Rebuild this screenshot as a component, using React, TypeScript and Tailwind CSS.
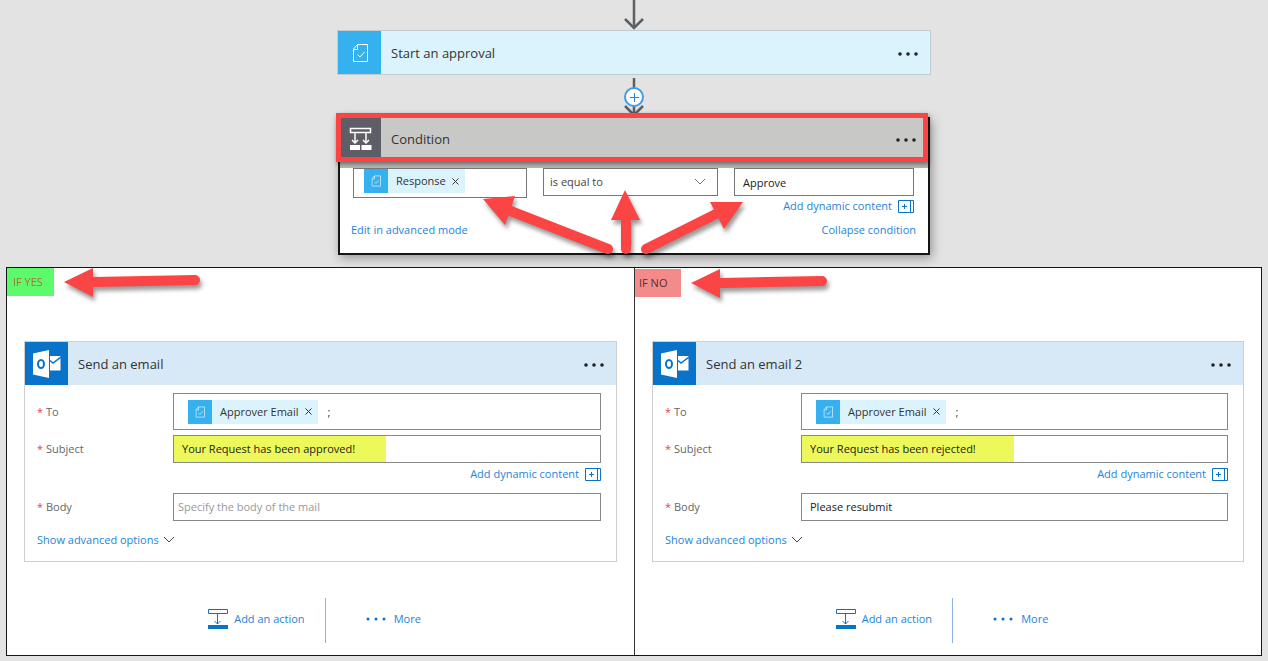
import { useState } from 'react';

const OutlookIcon = () => (
  <svg width="28" height="28" viewBox="0 0 28 28" fill="none">
    <path d="M17 6h10.500v14.500H17z" fill="#fff" />
    <path d="M17 10.500l3 2.500 8-6" stroke="#0873c8" strokeWidth="1.500" />
    <path d="M0 3.500L16 0v28L0 24.500z" fill="#fff" />
    <ellipse cx="8" cy="14" rx="3" ry="4" stroke="#0873c8" strokeWidth="2" />
  </svg>
);

const ApprovalIcon = ({ size = 20 }: { size?: number }) => (
  <svg width={size} height={size} viewBox="0 0 20 20" fill="none" stroke="#fff">
    <path d="M7.500 1.500H17.500V18.500H3.500V6z" />
    <path d="M3.500 6.500H7.500V1.500" />
    <path d="M7.500 11.500l2.500 2.500 4.500-5" />
  </svg>
);

const ConditionIcon = () => (
  <svg width="24" height="24" viewBox="0 0 24 24" fill="none" stroke="#fff">
    <path d="M1.500 1.500h20v4h-20z" strokeWidth="1.500" />
    <path d="M6 6v10M17 6v10" strokeWidth="1.500" />
    <path d="M3 13l3 3 3-3M14 13l3 3 3-3" strokeWidth="1.500" />
    <path d="M1 18h10v5H1zM12.500 18h10v5h-10z" fill="#fff" stroke="none" />
  </svg>
);

const AddActionIcon = () => (
  <svg width="20" height="20" viewBox="0 0 20 20" fill="none" stroke="#0873c8">
    <path d="M.5.500h19v4H.5z" />
    <path d="M9.500 5v10M6.500 12l3 3 3-3" />
    <path d="M0 16h20v4H0z" fill="#0873c8" stroke="none" />
  </svg>
);

const Chevron = ({ className }: { className: string }) => (
  <svg width="12" height="8" viewBox="0 0 12 8" fill="none" className={className}>
    <path d="M1 1l5 5 5-5" stroke="currentColor" />
  </svg>
);

const MenuButton = ({ label }: { label: string }) => (
  <button type="button" aria-label={label} className="ml-auto mr-3 mt-0.5 text-[#222]">
    <svg width="20" height="4" viewBox="0 0 20 4" fill="currentColor">
      <circle cx="2" cy="2" r="1.800" />
      <circle cx="10" cy="2" r="1.800" />
      <circle cx="18" cy="2" r="1.800" />
    </svg>
  </button>
);

const AddDynamicContent = () => (
  <button type="button" className="flex items-center gap-1.5 text-[#2583d8]">
    Add dynamic content
    <svg width="16" height="13" viewBox="0 0 16 13" fill="none" stroke="#0873c8">
      <path d="M.5.500h15v12H.5zM12.500.500v12M4 6.500h5M6.500 4v5" />
    </svg>
  </button>
);

const Token = ({ text }: { text: string }) => (
  <span className="flex h-6 items-center bg-[#dbf3fc]">
    <span className="flex h-6 w-6 items-center justify-center bg-[#35b1ef]">
      <ApprovalIcon size={12} />
    </span>
    <span className="pl-2 text-[#333]">{text}</span>
    <button type="button" aria-label={`Remove ${text}`} className="px-1.5">
      <svg width="7" height="7" viewBox="0 0 7 7" stroke="#333">
        <path d="M.5.500l6 6M6.500.500l-6 6" />
      </svg>
    </button>
  </span>
);

type ArrowProps = { head: string; shaft: string };

const Arrow = ({ head, shaft }: ArrowProps) => (
  <g className="drop-shadow-[2px_4px_2px_rgba(0,0,0,0.4)]">
    <path d={shaft} stroke="#fb4444" strokeWidth="10" strokeLinecap="round" />
    <path d={head} fill="#fb4444" />
  </g>
);

const Condition = () => {
  const [operator, setOperator] = useState<string>('is equal to');

  return (
    <section className="relative w-full max-w-[592px] border-2 border-t-0 border-[#151515] bg-white pb-3.5 shadow-[2px_3px_10px_rgba(0,0,0,0.35)]">
      <header className="flex h-11 items-center bg-[#c8c8c7]">
        <div className="flex h-full w-[41px] items-center justify-center bg-[#5e5e68]">
          <ConditionIcon />
        </div>
        <h2 className="pl-2.5 text-[13px] text-[#333]">Condition</h2>
        <MenuButton label="Condition menu" />
      </header>
      <div className="h-[7px] bg-[#b4b4b2]" />
      <div className="pl-[11px] pr-3">
        <div className="grid grid-cols-[174fr_175fr_180fr] items-start gap-4 px-0.5">
          <div className="flex h-[30px] min-w-0 items-start border border-[#777] pl-2.5">
            <Token text="Response" />
            <input aria-label="Value to check" className="min-w-0 flex-1 outline-none" />
          </div>
          <div className="relative min-w-0">
            <select
              aria-label="Operator"
              value={operator}
              onChange={(e) => setOperator(e.target.value)}
              className="h-7 w-full appearance-none border border-[#777] bg-white pl-1.5 text-[#444]"
            >
              <option>is equal to</option>
              <option>is not equal to</option>
            </select>
            <Chevron className="pointer-events-none absolute right-3 top-2.5 text-[#777]" />
          </div>
          <input
            aria-label="Compared value"
            defaultValue="Approve"
            className="h-7 min-w-0 border border-[#777] pl-2 text-[#222]"
          />
        </div>
        <div className="-mt-px flex justify-end pr-0.5">
          <AddDynamicContent />
        </div>
        <div className="mt-1.5 flex justify-between text-[#2583d8]">
          <a href="#advanced">Edit in advanced mode</a>
          <a href="#collapse">Collapse condition</a>
        </div>
      </div>
      <div className="absolute -left-1 right-0 -top-1 h-[49px] border-[5px] border-[#fb4444] shadow-[1px_2px_4px_rgba(0,0,0,0.4)]" />
      <svg className="pointer-events-none absolute left-[140px] top-[70px] overflow-visible" width="270" height="70" viewBox="480 187 270 70" fill="none">
        <Arrow head="M483 199l32-3-10 29z" shaft="M508 210L608 249" />
        <Arrow head="M625 190l15 30h-29z" shaft="M626 216V249" />
        <Arrow head="M743 202l-33 0 14 27z" shaft="M646 249L716 214" />
      </svg>
    </section>
  );
};

type EmailProps = {
  id: string;
  title: string;
  subject: string;
  body: string;
};

const EmailCard = ({ id, title, subject, body }: EmailProps) => (
  <section className="border border-[#cfcfcf] bg-white pb-3">
    <header className="flex h-[43px] items-center bg-[#d7e8f7]">
      <div className="flex h-full w-[43px] items-center justify-center bg-[#0873c8]">
        <OutlookIcon />
      </div>
      <h2 className="pl-2.5 text-[13px] text-[#333]">{title}</h2>
      <MenuButton label={`${title} menu`} />
    </header>
    <div className="pl-3 pr-[15px] pt-2">
      <div className="flex items-center">
        <label htmlFor={`${id}-to`} className="w-[136px] text-[#666]">
          <span className="text-[#e04848]">*</span> To
        </label>
        <div className="flex h-[37px] flex-1 items-center border border-[#888] pl-3.5">
          <Token text="Approver Email" />
          <input id={`${id}-to`} defaultValue=";" className="min-w-0 flex-1 pl-2.5 outline-none" />
        </div>
      </div>
      <div className="mt-[5px] flex items-center">
        <label htmlFor={`${id}-subject`} className="w-[136px] text-[#666]">
          <span className="text-[#e04848]">*</span> Subject
        </label>
        <div className="flex h-7 flex-1 border border-[#888]">
          <input id={`${id}-subject`} defaultValue={subject} className="w-[212px] bg-[#edf95a] pl-2 text-[#222] outline-none" />
        </div>
      </div>
      <div className="mt-0.5 flex justify-end">
        <AddDynamicContent />
      </div>
      <div className="mt-2.5 flex items-center">
        <label htmlFor={`${id}-body`} className="w-[136px] text-[#666]">
          <span className="text-[#e04848]">*</span> Body
        </label>
        <div className="flex h-7 flex-1 border border-[#888]">
          <input
            id={`${id}-body`}
            defaultValue={body}
            placeholder="Specify the body of the mail"
            className="flex-1 pl-2 text-[#222] outline-none placeholder:text-[#999] placeholder-shown:pl-1"
          />
        </div>
      </div>
      <button type="button" className="mt-2.5 flex items-center gap-1 text-[#2583d8]">
        Show advanced options
        <Chevron className="text-[#444]" />
      </button>
    </div>
  </section>
);

const BranchActions = () => (
  <div className="mt-9 flex h-[45px] justify-center text-[#2583d8]">
    <button type="button" className="flex items-center gap-1.5 border-r border-[#8fb2e4] px-5 pb-1">
      <AddActionIcon />
      Add an action
    </button>
    <button type="button" className="flex items-center gap-2 pb-1 pl-10 pr-8">
      <svg width="20" height="4" viewBox="0 0 20 4" fill="#0873c8">
        <circle cx="2" cy="2" r="1.500" />
        <circle cx="10" cy="2" r="1.500" />
        <circle cx="18" cy="2" r="1.500" />
      </svg>
      More
    </button>
  </div>
);

const BranchArrow = () => (
  <svg width="140" height="36" viewBox="0 0 140 36" fill="none" className="ml-2.5 overflow-visible">
    <Arrow head="M0 14L29 0v29z" shaft="M30 14L131 12" />
  </svg>
);

const App = () => {
  return (
    <main className="flex min-h-screen flex-col items-center bg-[#e3e3e3] px-1.5 pb-1 font-['Open_Sans',sans-serif] text-[11px] leading-[18px] text-[#333]">
      <svg width="22" height="30" viewBox="0 0 22 30" fill="none" stroke="#5d5f61">
        <path d="M11 0v28" strokeWidth="2.500" />
        <path d="M2 19l9 9 9-9" strokeWidth="2.500" />
      </svg>
      <section className="flex h-[45px] w-full max-w-[594px] items-center border border-[#c4cbd0] bg-[#dbf3fc]">
        <div className="flex h-full w-[43px] items-center justify-center bg-[#35b1ef]">
          <ApprovalIcon />
        </div>
        <h2 className="pl-2.5 text-[13px] text-[#333]">Start an approval</h2>
        <MenuButton label="Start an approval menu" />
      </section>
      <div className="relative">
        <svg width="22" height="42" viewBox="0 0 22 42" fill="none" stroke="#5d5f61">
          <path d="M11 3v36" strokeWidth="2.500" />
          <path d="M2 31l9 9 9-9" strokeWidth="2.500" />
        </svg>
        <button
          type="button"
          aria-label="Insert step"
          className="absolute left-px top-3 flex h-5 w-5 items-center justify-center rounded-full border-2 border-[#3e9cea] bg-white"
        >
          <svg width="9" height="9" viewBox="0 0 9 9" stroke="#2583d8">
            <path d="M4.500 0v9M0 4.500h9" />
          </svg>
        </button>
      </div>
      <Condition />
      <div className="mt-3 grid w-full grid-cols-2 border border-[#151515] bg-white">
        <div className="px-[17px] pb-3">
          <div className="-ml-[17px] flex h-[73px] items-start">
            <h3 className="w-[47px] bg-[#5cfb6c] py-[5px] pl-1.5 text-[#a5763a]">IF YES</h3>
            <BranchArrow />
          </div>
          <EmailCard id="yes" title="Send an email" subject="Your Request has been approved!" body="" />
          <BranchActions />
        </div>
        <div className="border-l border-[#333] px-[17px] pb-3">
          <div className="-ml-[17px] flex h-[73px] items-start pt-px">
            <h3 className="w-[46px] bg-[#f38b8b] py-[5px] pl-1 text-[#5a3030]">IF NO</h3>
            <BranchArrow />
          </div>
          <EmailCard id="no" title="Send an email 2" subject="Your Request has been rejected!" body="Please resubmit" />
          <BranchActions />
        </div>
      </div>
    </main>
  );
};

export default App;
